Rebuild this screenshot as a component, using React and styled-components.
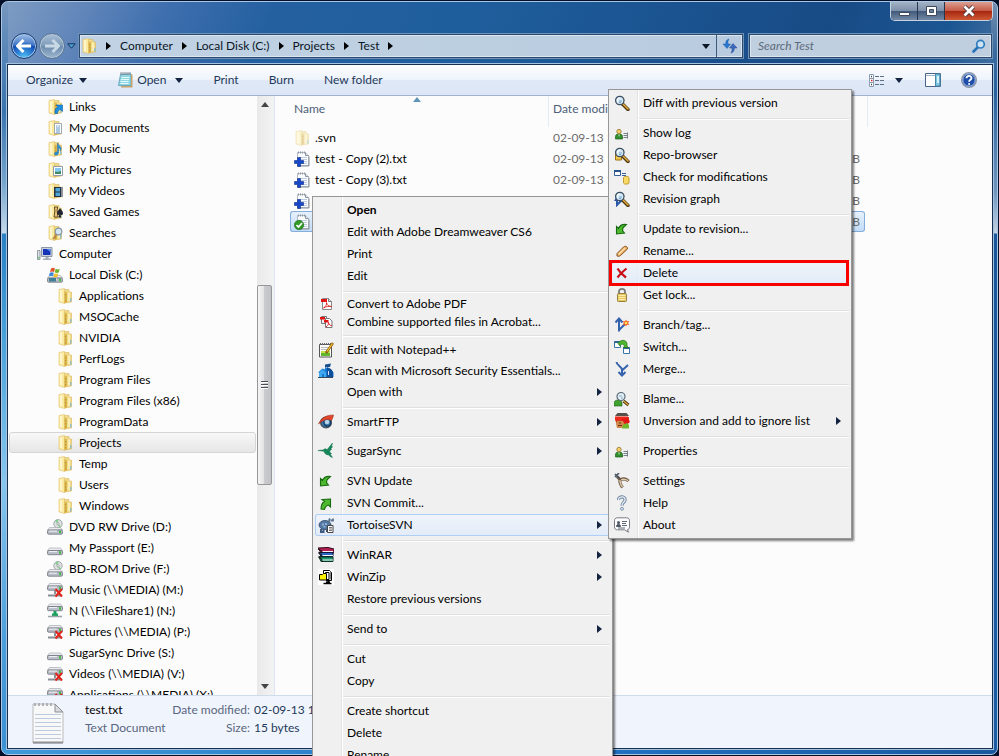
import React from "react";
import styled, { createGlobalStyle, css } from "styled-components";

const Global = createGlobalStyle`
  * { box-sizing: border-box; }
  html, body { margin: 0; height: 100%; overflow: hidden; background: #04102a; }
  body, button, input, table { font-family: Lato, "Open Sans", sans-serif; font-size: 12px; line-height: 16px; }
  button { margin: 0; padding: 0; border: 0; background: none; color: inherit; }
  ul { margin: 0; padding: 0; list-style: none; }
  svg { display: block; flex: none; }
`;

/* ---------- icons ---------- */

const Folder = ({ pale }) => (
  <g opacity={pale ? 0.5 : 1}>
    <path d="M6 1.500h6v2.500h2.500v10L7 15z" fill="#f0d98a" stroke="#dcb95c" strokeWidth=".6" />
    <path d="M2 1.500 7.500.5v15L2 14z" fill="#fbeaa2" stroke="#e0c068" strokeWidth=".6" />
    <path d="M3 2.500v10.500l2 .5V2z" fill="#fff6cd" />
    <path d="M7.500 3.500 10 4v10.500l-2.500 1z" fill="#dcb94f" />
    <path d="M8.700 6v8" stroke="#c08a2c" strokeDasharray="1.500 1.500" />
    <path d="M11 4.500h2V13h-2z" fill="#fbeeb4" />
    <path d="M13.800 10v3.500" stroke="#69b5dd" />
  </g>
);
const Lens = ({ tint = "#d5e9f5" }) => (
  <>
    <path d="M8.500 9l5.500 5.500" stroke="#4a3513" strokeWidth="3.400" strokeLinecap="round" />
    <path d="M9 9l5 5" stroke="#e0a93c" strokeWidth="1.600" strokeLinecap="round" />
    <circle cx="5.800" cy="5.500" r="4.200" fill={tint} stroke="#3b4f63" strokeWidth="1.300" />
    <path d="M3.500 6.500a3 3 0 0 1 2.500-3.500" stroke="#fff" fill="none" />
    <path d="M5 6h3M5 7.500h2" stroke="#5e95c4" strokeWidth=".8" />
  </>
);
const Person = () => (
  <>
    <path d="M1.500 14v-2.500C1.500 9.500 3 9 5 9s3.500.5 3.500 2.500V14z" fill="#2f8f2b" stroke="#1d5c1a" strokeWidth=".7" />
    <circle cx="5" cy="6.500" r="2.200" fill="#f2cf6a" stroke="#8a6a1c" strokeWidth=".7" />
    <path d="M4.300 9.500 5 12l.8-2.500z" fill="#e8f4e0" />
    <path d="M9.500 8.500h4M9.500 10.500h4M9.500 12.500h4M13.500 7.500v6" stroke="#69747d" strokeWidth=".9" />
  </>
);
const Drive = ({ y = 8 }) => (
  <>
    <path d={`M2.500 ${y}h11l2 2.500H.5z`} fill="#e9ebee" stroke="#9a9ea6" strokeWidth=".6" />
    <rect x=".5" y={y + 2.5} width="15" height="4.200" rx="1.200" fill="#b9bdc7" stroke="#6d727c" strokeWidth=".8" />
    <path d={`M2 ${y + 3.6}h8`} stroke="#f3f4f7" />
    <path d={`M13 ${y + 3.3}v2.400`} stroke="#1fbe1f" strokeWidth="1.600" />
  </>
);
const Disc = () => (
  <>
    <circle cx="11" cy="4.800" r="4.200" fill="#dfe4e2" stroke="#8b9397" strokeWidth=".8" />
    <path d="M11 4.800 8 2a4 4 0 0 1 3-1.200zM11 4.800 14 7.600a4 4 0 0 1-2 1.200z" fill="#7ccf8a" />
    <circle cx="11" cy="4.800" r="1.200" fill="#fff" stroke="#777" strokeWidth=".6" />
    <Drive y={8.500} />
  </>
);
const Page = () => (
  <>
    <path d="M3.500 1.500h8l3 3v10h-11z" fill="#fbfcfe" stroke="#b7bdc6" />
    <path d="M4 1.500h7" stroke="#8f96a2" strokeDasharray="1 1" strokeWidth="2" />
    <path d="M11.500 1.500v3h3" fill="#dfe3ea" stroke="#8c93a0" />
    <path d="M5 6.500h8M5 8.500h8M5 10.500h8M5 12.500h8" stroke="#bccbe2" />
    <path d="M3.500 15h11.500v-9.500" fill="none" stroke="#8a909a" />
  </>
);
const Pdf = () => (
  <>
    <path d="M4.500 2.500h6l3 3v8h-9z" fill="#fff" stroke="#8a8a8a" />
    <path d="M10.500 2.500v3h3" fill="#ddd" stroke="#777" />
    <path d="M3 3h6v3H3z" fill="#e11414" />
    <path d="M5.500 12c2.500-1.500 3.200-3.500 3-5.500.5 3 2.500 4 5 4-3-.5-5.500 0-8 1.500z" fill="none" stroke="#d22" strokeWidth=".9" />
  </>
);
const Cross = () => <path d="M8.500 7l6.500 7.500M15 7l-6.500 7.500" stroke="#e0261b" strokeWidth="2" />;

const art = {
  folder: <Folder />,
  paleFolder: <Folder pale />,
  links: <><Folder /><path d="M8 14.500c-.5-4 1-6 3-6.500L9 6h6.500v6.500L13.500 10.500c-2 .5-3 2-3 4z" fill="#1d8fe0" stroke="#0b5ca5" strokeWidth=".6" /></>,
  documents: <><Folder /><path d="M7.500 3.500h7v10h-7z" fill="#fff" stroke="#8c99a8" strokeWidth=".8" /><path d="M9 6h1.500M9 8h4M9 10h4M9 12h4M11.500 6H13" stroke="#5e94ca" /></>,
  music: <><Folder /><path d="M10.500 2v9.500c-1-1-3.500 0-3 1.700.6 1.600 4 1 4-1.500V6.500c1.500.5 2 2 1.500 3.500 2-2.500 1-4-1-5.500z" fill="#2a96dc" stroke="#145f9e" strokeWidth=".5" /></>,
  pictures: <><Folder /><path d="M6.500 4.500h9v9h-9z" fill="#fff" stroke="#929ba8" /><path d="M8 6h6v6H8z" fill="#86c8ef" /><path d="M8 12V9.500l2.500.5 3.500-1V12z" fill="#3f8b60" /></>,
  videos: <><Folder /><path d="M7 4h8.500v10H7z" fill="#29333f" /><path d="M8.500 5h4.500v3.500H8.500zM8.500 9.500h4.500V13H8.500z" fill="#4da4d8" /><path d="M14.500 4.500v9" stroke="#e2e8ed" strokeDasharray="1 1" /></>,
  games: <><Folder /><path d="M7.500 3h3v2l-.5 1 1 7H7l1-7-.5-1z" fill="#e6c27a" stroke="#4e3512" strokeWidth=".8" /><path d="M13 4c1 2 3 3 3 5.500 0 1.500-1.500 2-2.500 1l.8 3h-3l1-3c-1 1-2.300.3-2.300-1C10 7 12 6 13 4z" fill="#222631" /></>,
  searches: <><Folder /><path d="M10 9l-4 5" stroke="#b98646" strokeWidth="2" /><circle cx="11.500" cy="6.500" r="3.300" fill="#d3e6f1" stroke="#8697a5" strokeWidth="1.200" /></>,
  computer: <><path d="M4.500 1.500H15v9H4.500z" fill="#c9d2dd" stroke="#8d98a6" /><path d="M6 3h7.500v6H6z" fill="#1733b8" /><path d="M9.500 3h4v3z" fill="#5a8df0" /><path d="M8.500 11h3v1.500H14V14H6v-1.500h2.500z" fill="#a4adb8" /><path d="M.5 4.500h2.500v9H.5z" fill="#dfe4ea" stroke="#7d8792" strokeWidth=".8" /><path d="M1.800 11v1.500" stroke="#2b2" /></>,
  localDisk: <><Drive y={8.500} /><path d="M2 11h7v3.500H2z" fill="#3f7f98" /><path d="M4 1.500c1.500-1 2.500-1 4 0L7 5c-1.500-.8-2.500-.8-4 0z" fill="#e2552d" /><path d="M8.700 1.800c1.500.8 2.500.8 4 .2l-1 3.500c-1.500.6-2.500.6-4-.2z" fill="#6cb52d" /><path d="M2.800 5.800c1.500-.8 2.500-.8 4 0l-1 3.500c-1.500-.8-2.500-.8-4 0z" fill="#3a86d8" /><path d="M7.400 6.200c1.500.8 2.500.8 4 .2l-1 3.500c-1.500.6-2.500.6-4-.2z" fill="#f4c22e" /></>,
  disc: <Disc />,
  drive: <Drive y={8} />,
  offline: <><Drive y={1.500} /><path d="M8 8.500V12M1 13.500h14" stroke="#8a8f96" strokeWidth="2" /><Cross /></>,
  network: <><Drive y={1} /><path d="M8 8v4M5 12h6" stroke="#18a05c" strokeWidth="3" /><path d="M1 13.500h14" stroke="#9ca3a8" strokeWidth="1.500" /></>,
  added: <><Page /><path d="M3.500 6.500h3v3H9.500v3H6.500v3h-3v-3H.5v-3h3z" fill="#1648c9" stroke="#0b2c8a" strokeWidth=".6" /></>,
  normal: <><Page /><circle cx="5" cy="11" r="4.700" fill="#2f9a26" stroke="#1d6418" strokeWidth=".6" /><path d="M2.500 11l2 2 3.500-4" stroke="#fff" strokeWidth="1.700" fill="none" /></>,
  notepadFile: <><path d="M3.500 2.500 14 2v11.500H1.500z" fill="#8fd5e2" stroke="#5b9bb0" strokeWidth=".8" /><path d="M14 2.500h1.500v13H4V14h10z" fill="#c8a46b" /><path d="M3.500 1.500h10.500" stroke="#6d7680" strokeDasharray="1 1" strokeWidth="2.500" /><path d="M4.500 5.500h8M4 7.500h8M3.500 9.500h8M3.500 11.500h8" stroke="#e4fafd" /></>,
  pdf: <Pdf />,
  pdfs: <><path d="M3.500 2.500h5v7h-5z" fill="#eee" stroke="#777" /><path d="M2 3h5v2.500H2z" fill="#e11414" /><path d="M7.500 4.500h4l2.500 2.500v6.500H7.500z" fill="#fff" stroke="#777" /><path d="M6 6h4.500v2.500H6z" fill="#e11414" /><path d="M8 13C9.500 12 10.500 11 10.500 8.500c.5 2 1.500 3 3.500 3" fill="none" stroke="#d22" /></>,
  notepadpp: <><path d="M1.500 2.500h12v12.500h-12z" fill="#fff" stroke="#555" /><path d="M2 2h11" stroke="#666" strokeWidth="2" strokeDasharray="1 1" /><path d="M3 5.500h9M3 7.500h7" stroke="#bbb" /><path d="M3 9h9v5H3z" fill="#61b72d" /><path d="M3 9h9v2H3z" fill="#c3e04e" /><path d="M8 11 15 1" stroke="#8a5a12" strokeWidth="2.600" /><path d="M9 9.500 14.500 1.500" stroke="#f5c430" strokeWidth="1.300" /></>,
  castle: <><path d="M0 9.500 4.500 5.500 7 6.500V4l6 2.500 2.500 3V14H1V9.500z" fill="#1579cf" /><path d="M9 4l4 2 2 3v5H9z" fill="#0f4f9b" /><path d="M7 1.500 13 .5l-1 3.500H7z" fill="#1a4f8e" /><path d="M1 9.500l3.500-3 3.500 3V14H6v-3H4v3H1z" fill="#3fa8f0" /><path d="M10.500 8v4" stroke="#cfe5f8" /><path d="M0 14.500h15" stroke="#39495a" /></>,
  smartftp: <><circle cx="8" cy="8.500" r="5.300" fill="#3b75a8" stroke="#4d5561" strokeWidth="1.500" /><circle cx="9" cy="8" r="2.300" fill="#b7d4e8" /><path d="M.5 10C3 4 8 1 15.500 1c-.5 3-1.500 5-3 6.500 0-3-6-3-12 2.500z" fill="#e0472a" stroke="#8d2617" strokeWidth=".5" /><path d="M6 7.500a3.500 3.500 0 1 0 6-1" fill="none" stroke="#153c64" strokeWidth="1.300" /></>,
  bird: <path d="M0 7.500 5 7l2-1.200c1 0 1.500.5 2 1L14.500 0l-.8 3 .8 1-1.500 1.500.5 1-2 1.500.5 1.500 1.500 1-1 1 2 3-2.500-1L11 12C8 12 6.500 10.500 6 8.200z" fill="#16875b" stroke="#0f6f49" strokeWidth=".5" />,
  update: <path d="M2.500 5.500 4.500 7.500C6 4 9 3 12.500 3.500l-2 2C9 6 8.500 7.500 8.500 9.500L10.500 12 2.500 13z" fill="#4dba2d" stroke="#196b12" strokeWidth="1.100" />,
  commit: <path d="M4 4.500 12.500 4v8l-2-2c-2 .5-3.500 2-4 4.500L3 14c0-3.500 1-6 3.500-7.500z" fill="#4dba2d" stroke="#196b12" strokeWidth="1.100" />,
  tortoise: <><ellipse cx="7" cy="8" rx="6" ry="4.500" fill="#5379a4" stroke="#2e4866" strokeWidth=".8" /><path d="M3 12v3h2.500v-3M9 12v3" stroke="#3c5b7e" strokeWidth="2" fill="none" /><path d="M4 6.500h2v2H4zM7 6h2v2H7zM5.500 9h2v1.500h-2z" fill="#8eb3d8" /><path d="M11 7c0-2.500-.5-4 1-5.500M12.500 3.500H15V1.500" stroke="#5b7590" strokeWidth="1.800" fill="none" /><path d="M9.500 8.500H15v7H9.500z" fill="#fff" stroke="#444" /><path d="M11 10.500h3M11 12h3M11 13.500h3" stroke="#555" strokeWidth=".8" /></>,
  winrar: <><path d="M0 1l10-.5L16 2v4H3z" fill="#b21e53" stroke="#330a19" /><path d="M1 5.500h14v4H3z" fill="#2866c4" stroke="#101a3c" /><path d="M1 10h14v4.500H3z" fill="#1a9a71" stroke="#0b3626" /><path d="M0 2l4 2v1.500l-3.500.5L4 8v1.500L.5 10 4 12.500V15" fill="none" stroke="#161616" /><path d="M4.500 4.500H15M4.500 8.500H15M4.500 13H15" stroke="#f5f5f5" /></>,
  winzip: <><path d="M0 0h16v16H0z" fill="#fff" /><path d="M5.500 4.500v-3h6l2 2v8H8" fill="none" stroke="#000" /><path d="M7.500 4v-.5h3.500v7H9" fill="none" stroke="#000" /><path d="M12.500 2.500v8" stroke="#888" /><path d="M1.500 5.500h3l1-1h3v6.500h-7z" fill="#fff200" stroke="#000" /><path d="M10.500 11.500V14M5.500 14.500h8M8 13h4" stroke="#000" strokeWidth="1.300" /></>,
  lens: <Lens />,
  person: <Person />,
  repo: <><path d="M1.500 6.500h6v6.500h-6z" fill="#f3c64e" stroke="#9d7213" /><Lens /></>,
  check: <><path d="M.5 1.500h6v5h-6z" fill="#fff" stroke="#355f9b" /><path d="M0 2h7" stroke="#2b5390" strokeWidth="2" /><path d="M8 4.500h4M8 6.500h4" stroke="#38629a" /><path d="M9.500 8.500c0-1.500 5.500-1.500 5.500 0v5.500c0 1.500-5.500 1.500-5.500 0z" fill="#f8db66" stroke="#b88a17" strokeWidth=".8" /></>,
  graph: <><path d="M3 7v7l6-6" fill="none" stroke="#2c58a8" strokeWidth="2" /><path d="M0 10l3-5 3 5" fill="#2c58a8" /><Lens /></>,
  rename: <><path d="M3 13 3 10.500l6.500-6.500c1.500-1.500 4.500-.5 4 2L6.500 12.500c-1 1-2.500 1-3.500.5z" fill="#e9ac5e" stroke="#7a4a1a" strokeWidth=".9" /><path d="M4.500 11.500l6.500-6.500" stroke="#ffe1ad" strokeWidth="1.500" /></>,
  remove: <path d="M3.500 3.500c2 3.500 4.500 6 8.500 9M12.500 3.500C9.500 6 6 9 3.500 12.500" stroke="#c80f17" strokeWidth="2.200" fill="none" />,
  lock: <><path d="M5 7V4.500c0-3.500 6-3.500 6 0V7" fill="none" stroke="#777a7c" strokeWidth="1.800" /><rect x="3.500" y="6.500" width="9" height="8" rx="1" fill="#e8c75f" stroke="#8d732c" strokeWidth=".9" /><path d="M4.500 8.500h7M4.500 10.500h7M4.500 12.500h7" stroke="#fbebae" /></>,
  branch: <><path d="M5 14.500V2M1.500 5.500 5 1.500l3.500 4M5 13l6-6" fill="none" stroke="#3562ac" strokeWidth="2" /><path d="M12 2.500l1 1.700 2.200-.2-1 2 1 2-2.200-.2-1 1.700-1-1.700-2.200.2 1-2-1-2 2.200.2z" fill="#f2662b" /><circle cx="12" cy="6" r="1.300" fill="#ffe15a" /></>,
  switch: <><path d="M.5 2.500h6v6h-6z" fill="#fff" stroke="#3a76a8" /><path d="M.5 3h6" stroke="#2d6698" strokeWidth="2" /><path d="M9.500 8.500h6v6h-6z" fill="#fff" stroke="#3a76a8" /><path d="M9.500 9h6" stroke="#2d6698" strokeWidth="2" /><path d="M4 4.500c3-4.500 8-4 9 0V7l1.500 1.500H9.500L10.500 7C9.500 4.500 7 4.500 6 7z" fill="#4fb52d" stroke="#237017" strokeWidth=".7" /></>,
  merge: <path d="M2.500 1c.5 4 5.500 4 5.500 8v5M14 4 8 9.500M4.500 11 8 14.500l3.500-3.500" fill="none" stroke="#3562ac" strokeWidth="2" />,
  blame: <><path d="M0 15v-3c0-2 2-3 4-3s4 1 4 3v3z" fill="#3fa22d" stroke="#1d5c1a" strokeWidth=".6" /><path d="M9.500 10l5 4" stroke="#4a3513" strokeWidth="3" /><path d="M9.500 10l5 4" stroke="#e0a93c" strokeWidth="1.300" /><circle cx="7" cy="5.500" r="4" fill="#e1eef6" stroke="#5c6975" strokeWidth="1.200" /><path d="M5 5h3M7 7h2" stroke="#86acc7" /></>,
  unversion: <><path d="M1 4h14v6l-4 2-9-2z" fill="#c63c22" /><path d="M3.500 0h9l2.500 3H1z" fill="#55504a" /><path d="M1 3.500h13v4H1z" fill="#ed2b1c" /><path d="M8 6l6-1 2 4-3 2-4-1z" fill="#e41515" /><path d="M3 8h6l2 4-3 3H3l-1-4z" fill="#cf8a4b" /><path d="M9 12l4-2 2 2v3.500H8z" fill="#72b62b" /><path d="M5 10h2M4 12.500h4" stroke="#6b3018" /></>,
  settings: <><path d="M3 3.500 6 6.500c-1 3 .5 5 2.500 8M6.500 7C9 5.500 12 5.500 14.500 8" fill="none" stroke="#6a5546" strokeWidth="3" /><path d="M6 7c-.5 3 1 5 2.500 7M7 6.800c3-1 5-.5 7 1" fill="none" stroke="#e3cba9" strokeWidth="1.400" /><path d="M1 4 5 0M1 1l4 4" stroke="#4b5966" strokeWidth="1.700" /></>,
  help: <><path d="M4.500 5c0-4.500 7.500-4 6.500.3C10.500 7.500 8 7.500 8 10.500" fill="none" stroke="#6f86a0" strokeWidth="3.200" /><path d="M4.500 5c0-4.500 7.500-4 6.500.3C10.500 7.500 8 7.500 8 10.300" fill="none" stroke="#e6eef6" strokeWidth="1.300" /><circle cx="8" cy="13.800" r="1.500" fill="#d5e0eb" stroke="#6f86a0" strokeWidth=".8" /></>,
  about: <><path d="M3.500.8h9c2 0 3 1 3 3v6c0 1.700-.7 2.500-2 2.800l1 2.600-4-2.400h-7c-2 0-3-1-3-3v-6c0-2 1-3 3-3z" fill="#fdfdfd" stroke="#6b6c78" strokeWidth=".9" /><circle cx="4.500" cy="5.500" r="1.500" fill="#4b5563" /><path d="M2.500 9.500c0-3 4-3 4 0zM8 4.500h5M8 6.500h4M8 8.500h5M4 11h7" fill="#4b5563" stroke="#3b4250" strokeWidth=".8" /></>,
};

const Icon = ({ name, size = 16 }) => (
  <svg width={size} height={size} viewBox="0 0 16 16" aria-hidden="true">{art[name]}</svg>
);

const Triangle = ({ dir = "right", color = "#14233f" }) => {
  const shapes = {
    right: [5, 8, "M0 0l5 4-5 4z"],
    down: [8, 5, "M0 0h8L4 5z"],
    up: [8, 5, "M0 5h8L4 0z"],
  };
  const [w, h, d] = shapes[dir];
  return <svg width={w} height={h} viewBox={`0 0 ${w} ${h}`} aria-hidden="true"><path d={d} fill={color} /></svg>;
};

/* ---------- window frame ---------- */

const Desktop = styled.div`
  position: relative;
  height: 100vh;
  padding: 1px;
  overflow: hidden;
`;

const WindowFrame = styled.div`
  display: flex;
  flex-direction: column;
  height: 100%;
  padding: 0 4px 5px 5px;
  border: 1px solid #a9c6e2;
  border-radius: 7px;
  background:
    linear-gradient(90deg, #3f9ad9 0, #2f83cc 300px, #1f6fbe 640px, #19589f 100%) bottom / 100% 6px no-repeat,
    linear-gradient(180deg, #7797bf 0, #4c7fb4 70px, #3b74ae 110px, #74a5cd 180px, #c6daeb 231px, #2a80c4 232px, #46a1d9 330px, #86c6ee 480px, #4b9edb 640px, #3a90d2 100%) left / 6px 100% no-repeat,
    linear-gradient(180deg, #7590b0 0, #3a6b9e 50px, #27619d 90px, #7096be 190px, #c2d2e2 231px, #1a569a 232px, #1c5ca2 100%) right / 6px 100% no-repeat,
    linear-gradient(115deg, #7f9dc3 0, #6488bb 70px, #3f6fae 150px, #2460a0 250px, #1f5e9d 420px, #174b86 760px, #1c5692 870px, #5f83a9 970px, #8099b5 100%);
`;

const TitleBar = styled.header`
  display: flex;
  justify-content: flex-end;
  align-items: flex-start;
  height: 32px;
`;

const CaptionGroup = styled.div`
  display: flex;
  border: 1px solid #c5d2e0;
  border-top: 0;
  border-radius: 0 0 5px 5px;
  overflow: hidden;
`;

const CaptionButton = styled.button`
  display: grid;
  place-items: center;
  width: ${(p) => (p.$close ? 47 : 27)}px;
  height: 18px;
  border-right: ${(p) => (p.$close ? 0 : "1px solid #26364c")};
  background: ${(p) => (p.$close
    ? "linear-gradient(#dba093 0, #c75b47 48%, #a5240f 50%, #cf5a35 100%)"
    : "linear-gradient(#a3b3c6 0, #7e91aa 48%, #40587a 50%, #7389a4 100%)")};
`;

const NavRow = styled.nav`
  display: flex;
  align-items: center;
  gap: 2px;
  height: 24px;
  margin: 0 1px 6px 4px;
`;

const Orb = styled.button`
  display: grid;
  place-items: center;
  width: 26px;
  height: 26px;
  border: 1px solid ${(p) => (p.$dim ? "#5c7794" : "#1c3d6d")};
  border-radius: 50%;
  background: ${(p) => (p.$dim
    ? "linear-gradient(#a9bfd5, #7d9bb9 50%, #6c8cae 52%, #9bb5cd)"
    : "radial-gradient(circle at 50% 100%, #53c7f7 0, #1c62c4 45%, transparent 60%), linear-gradient(#9fc1e8, #3c71c4 48%, #0f3e9e 52%, #1b66c9)")};
  box-shadow: inset 0 0 0 1px ${(p) => (p.$dim ? "#b9cbdc" : "#a9c8ec")};
`;

const Glass = css`
  display: flex;
  align-items: center;
  height: 24px;
  border: 1px solid #2b4a6d;
  box-shadow: inset 0 0 0 1px #dbe6f0, 0 0 0 1px #6f93b8;
  background: linear-gradient(90deg, #c0d2e3, #bccfe1 60%, #b9cbdf);
`;

const AddressBar = styled.div`
  ${Glass}
  flex: 1;
  min-width: 0;
  margin-left: 1px;
`;

const Crumbs = styled.div`
  display: flex;
  align-items: center;
  flex: 1;
  min-width: 0;
  gap: 9px;
  padding-left: 1px;
`;

const Crumb = styled.a`
  color: #0b1626;
  text-decoration: none;
  white-space: nowrap;
`;

const AddressButton = styled.button`
  display: grid;
  place-items: center;
  width: ${(p) => (p.$divided ? 26 : 20)}px;
  height: 22px;
  border-left: ${(p) => (p.$divided ? "1px solid #3d5b7c" : 0)};
`;

const SearchBox = styled.label`
  ${Glass}
  width: 243px;
  margin-left: 4px;
  padding: 0 5px 0 8px;
  background: #bfcfdf;
`;

const SearchInput = styled.input`
  flex: 1;
  min-width: 0;
  padding: 0;
  border: 0;
  outline: 0;
  background: transparent;
  font-style: italic;
  &::placeholder { color: #5d6b7c; opacity: 1; }
`;

const Client = styled.div`
  display: flex;
  flex-direction: column;
  flex: 1;
  min-height: 0;
  border: 1px solid #17304f;
  box-shadow: 0 0 0 1px #a5c3e0;
  background: #fcfcfc;
`;

/* ---------- toolbar ---------- */

const Toolbar = styled.div`
  display: flex;
  align-items: center;
  height: 31px;
  padding: 0 15px 0 18px;
  border-bottom: 1px solid #a0b4d0;
  background: linear-gradient(#fbfdff 0, #eff4fc 48%, #dfe8f6 52%, #dde7f7 100%);
  color: #1e395b;
`;

const ToolButton = styled.button`
  display: flex;
  align-items: center;
  gap: ${(p) => p.$gap ?? 6}px;
  margin-right: ${(p) => p.$after ?? 30}px;
`;

const Spacer = styled.div`
  flex: 1;
`;

/* ---------- panes ---------- */

const Panes = styled.div`
  display: flex;
  flex: 1;
  min-height: 0;
`;

const TreePane = styled.aside`
  display: flex;
  width: 267px;
  border-right: 1px solid #dbe5f3;
`;

const Tree = styled.ul`
  flex: 1;
  min-width: 0;
  overflow: hidden;
`;

const TreeRow = styled.li`
  display: flex;
  align-items: center;
  gap: 6px;
  height: 21px;
  margin: 0 1px;
  padding-left: ${(p) => 27 + p.$depth * 10}px;
  border: 1px solid transparent;
  border-radius: 3px;
  white-space: nowrap;
  ${(p) => p.$selected && css`
    border-color: #d5d5d5;
    background: linear-gradient(#f8f8f8, #e6e6e6);
  `}
`;

const ScrollTrack = styled.div`
  display: flex;
  flex-direction: column;
  width: 17px;
  background: linear-gradient(90deg, #e9e9e9, #f3f3f3);
`;

const ScrollButton = styled.button`
  display: grid;
  place-items: center;
  width: 16px;
  height: 17px;
`;

const ScrollThumb = styled.div`
  display: grid;
  place-items: center;
  width: 15px;
  height: 200px;
  margin: 172px 0 auto;
  border: 1px solid #979797;
  border-radius: 2px;
  background: linear-gradient(90deg, #f5f5f5 0, #e3e3e5 45%, #cbcbcf 50%, #c0c1c6 100%);
`;

const Files = styled.main`
  flex: 1;
  min-width: 0;
  padding-left: 15px;
  overflow: hidden;
`;

const FileTable = styled.table`
  table-layout: fixed;
  width: 578px;
  border-spacing: 0;
`;

const HeadCell = styled.th`
  position: relative;
  width: ${(p) => p.$width}px;
  height: 31px;
  padding: ${(p) => (p.$filler ? 0 : "5px 4px")};
  border-right: 1px solid ${(p) => (p.$plain ? "transparent" : "#e3ebf5")};
  color: #4c607a;
  font-weight: 400;
  text-align: left;
  vertical-align: top;
`;

const SortMark = styled.span`
  position: absolute;
  top: 1px;
  left: calc(50% - 6px);
`;

const FileRow = styled.tr`
  ${(p) => p.$selected && css`
    td { border-color: #84acdd; background: linear-gradient(#e6f1fc, #c2dcf7); }
  `}
`;

const Cell = styled.td`
  height: 21px;
  padding: 0 4px;
  border: 0 solid transparent;
  border-width: 1px 0;
  color: ${(p) => (p.$name ? "#000" : "#6d6d6d")};
  text-align: ${(p) => (p.$end ? "right" : "left")};
  white-space: nowrap;
  overflow: hidden;
  &:first-child { padding-left: 3px; border-left-width: 1px; border-radius: 3px 0 0 3px; }
  &:last-child { border-right-width: 1px; border-radius: 0 3px 3px 0; }
`;

const NameBox = styled.div`
  display: flex;
  align-items: center;
  gap: 5px;
  height: 19px;
`;

/* ---------- details ---------- */

const Details = styled.footer`
  display: flex;
  height: 53px;
  padding: 6px 24px;
  border-top: 1px solid #cfdcec;
  background: #f0f4fc;
  white-space: nowrap;
`;

const DetailName = styled.div`
  display: grid;
  grid-auto-rows: 18px;
  width: 82px;
  margin-left: 21px;
  color: #5a6780;
`;

const Strong = styled.span`
  color: #000;
`;

const DetailFacts = styled.dl`
  display: grid;
  grid-template-columns: 83px auto;
  grid-auto-rows: 18px;
  column-gap: 4px;
  margin: 0;
  dt { color: #5a6780; text-align: right; }
  dd { margin: 0; color: #1e395b; }
`;

/* ---------- context menus ---------- */

const MenuPanel = styled.div`
  position: absolute;
  left: ${(p) => p.$left}px;
  top: ${(p) => p.$top}px;
  width: ${(p) => p.$width}px;
  padding: 2px;
  border: 1px solid #979797;
  background: linear-gradient(90deg, transparent 28px, #e2e3e3 28px, #e2e3e3 29px, #fff 29px, #fff 30px, transparent 30px) #f0f0f0;
  background-clip: padding-box;
  box-shadow: 2px 2px 2px rgba(0, 0, 0, 0.5);
`;

const MenuItem = styled.button`
  position: relative;
  display: grid;
  grid-template-columns: 16px 1fr 5px;
  column-gap: 13px;
  align-items: center;
  width: 100%;
  height: ${(p) => p.$height}px;
  padding: 0 8px 0 3px;
  border-radius: 3px;
  color: #000;
  font-weight: ${(p) => (p.$bold ? 700 : 400)};
  text-align: left;
  white-space: nowrap;
  ${(p) => p.$hot && css`
    box-shadow: inset 0 0 0 1px #aecff7;
    background: linear-gradient(rgba(240, 245, 252, 0.8), rgba(222, 234, 250, 0.8));
  `}
  ${(p) => p.$marked && css`
    &::after {
      content: "";
      position: absolute;
      inset: -2px 0 -2px -2px;
      border: 3px solid #f80000;
    }
  `}
`;

const Separator = styled.hr`
  height: 2px;
  margin: 4px 0 2px 28px;
  border: 0;
  border-top: 1px solid #e0e0e0;
  border-bottom: 1px solid #fff;
`;

/* ---------- data ---------- */

const tree = [
  ["links", "Links", 1], ["documents", "My Documents", 1], ["music", "My Music", 1],
  ["pictures", "My Pictures", 1], ["videos", "My Videos", 1], ["games", "Saved Games", 1],
  ["searches", "Searches", 1], ["computer", "Computer", 0], ["localDisk", "Local Disk (C:)", 1],
  ["folder", "Applications", 2], ["folder", "MSOCache", 2], ["folder", "NVIDIA", 2],
  ["folder", "PerfLogs", 2], ["folder", "Program Files", 2], ["folder", "Program Files (x86)", 2],
  ["folder", "ProgramData", 2], ["folder", "Projects", 2], ["folder", "Temp", 2],
  ["folder", "Users", 2], ["folder", "Windows", 2], ["disc", "DVD RW Drive (D:)", 1],
  ["drive", "My Passport (E:)", 1], ["disc", "BD-ROM Drive (F:)", 1],
  ["offline", "Music (\\\\MEDIA) (M:)", 1], ["network", "N (\\\\FileShare1) (N:)", 1],
  ["offline", "Pictures (\\\\MEDIA) (P:)", 1], ["drive", "SugarSync Drive (S:)", 1],
  ["offline", "Videos (\\\\MEDIA) (V:)", 1], ["offline", "Applications (\\\\MEDIA) (X:)", 1],
];

const files = [
  { icon: "paleFolder", name: ".svn", date: "02-09-13 14:26", type: "File folder", size: "" },
  { icon: "added", name: "test - Copy (2).txt", date: "02-09-13 14:26", type: "Text Document", size: "1 KB" },
  { icon: "added", name: "test - Copy (3).txt", date: "02-09-13 14:26", type: "Text Document", size: "1 KB" },
  { icon: "added", name: "test - Copy.txt", date: "02-09-13 14:26", type: "Text Document", size: "1 KB" },
  { icon: "normal", name: "test.txt", date: "02-09-13 14:26", type: "Text Document", size: "1 KB", selected: true },
];

const line = { line: true };
const fileMenu = [
  { label: "Open", bold: true }, { label: "Edit with Adobe Dreamweaver CS6" }, { label: "Print" }, { label: "Edit" },
  line,
  { icon: "pdf", label: "Convert to Adobe PDF", height: 18 },
  { icon: "pdfs", label: "Combine supported files in Acrobat...", height: 18 },
  line,
  { icon: "notepadpp", label: "Edit with Notepad++", height: 21 },
  { icon: "castle", label: "Scan with Microsoft Security Essentials...", height: 21 },
  { label: "Open with", sub: true },
  line,
  { icon: "smartftp", label: "SmartFTP", sub: true, height: 21 },
  line,
  { icon: "bird", label: "SugarSync", sub: true },
  line,
  { icon: "update", label: "SVN Update" }, { icon: "commit", label: "SVN Commit..." },
  { icon: "tortoise", label: "TortoiseSVN", sub: true, hot: true },
  line,
  { icon: "winrar", label: "WinRAR", sub: true }, { icon: "winzip", label: "WinZip", sub: true },
  { label: "Restore previous versions" },
  line,
  { label: "Send to", sub: true },
  line,
  { label: "Cut" }, { label: "Copy" },
  line,
  { label: "Create shortcut" }, { label: "Delete" }, { label: "Rename" },
];

const svnMenu = [
  { icon: "lens", label: "Diff with previous version" },
  line,
  { icon: "person", label: "Show log" }, { icon: "repo", label: "Repo-browser" },
  { icon: "check", label: "Check for modifications" }, { icon: "graph", label: "Revision graph" },
  line,
  { icon: "update", label: "Update to revision..." }, { icon: "rename", label: "Rename..." },
  { icon: "remove", label: "Delete", hot: true, marked: true }, { icon: "lock", label: "Get lock..." },
  line,
  { icon: "branch", label: "Branch/tag..." }, { icon: "switch", label: "Switch..." }, { icon: "merge", label: "Merge..." },
  line,
  { icon: "blame", label: "Blame..." }, { icon: "unversion", label: "Unversion and add to ignore list", sub: true },
  line,
  { icon: "person", label: "Properties" },
  line,
  { icon: "settings", label: "Settings" }, { icon: "help", label: "Help" }, { icon: "about", label: "About" },
];

const Menu = ({ items, left, top, width, name }) => (
  <MenuPanel role="menu" aria-label={name} $left={left} $top={top} $width={width}>
    {items.map((item, i) => item.line ? <Separator key={i} /> : (
      <MenuItem key={i} role="menuitem" $height={item.height ?? 22} $bold={item.bold} $hot={item.hot} $marked={item.marked}>
        {item.icon ? <Icon name={item.icon} /> : <span />}
        <span>{item.label}</span>
        {item.sub && <Triangle />}
      </MenuItem>
    ))}
  </MenuPanel>
);

export default function App() {
  return (
    <Desktop>
      <Global />
      <WindowFrame>
        <TitleBar>
          <CaptionGroup>
            <CaptionButton aria-label="Minimize">
              <svg width="13" height="12"><path d="M1.500 7.500h10v3h-10z" fill="#fff" stroke="#3e4a5d" /></svg>
            </CaptionButton>
            <CaptionButton aria-label="Maximize">
              <svg width="13" height="12"><path d="M1.500 1.500h10v9h-10z" fill="#fff" stroke="#3e4a5d" /><path d="M4.500 4.500h4v3h-4z" fill="#6c7f99" stroke="#3e4a5d" /></svg>
            </CaptionButton>
            <CaptionButton $close aria-label="Close">
              <svg width="14" height="12"><path d="M2.500 1.500 11.500 10.500M11.500 1.500 2.500 10.500" stroke="#4f3a40" strokeWidth="4.500" /><path d="M2.500 1.500 11.500 10.500M11.500 1.500 2.500 10.500" stroke="#fff" strokeWidth="2.600" /></svg>
            </CaptionButton>
          </CaptionGroup>
        </TitleBar>

        <NavRow aria-label="Location">
          <Orb aria-label="Back"><svg width="16" height="14"><path d="M7.500 1 1.500 7l6 6M2 7h13" fill="none" stroke="#fff" strokeWidth="3" /></svg></Orb>
          <Orb $dim aria-label="Forward"><svg width="16" height="14"><path d="M8.500 1l6 6-6 6M14 7H1" fill="none" stroke="#c9d8e5" strokeWidth="3" /></svg></Orb>
          <button aria-label="Recent pages"><svg width="9" height="6"><path d="M.8.800h7.400L4.500 5.200z" fill="#4f9fd8" stroke="#123459" /></svg></button>
          <AddressBar>
            <Crumbs>
              <Icon name="folder" />
              {["Computer", "Local Disk (C:)", "Projects", "Test"].map((c) => (
                <React.Fragment key={c}><Triangle color="#000" /><Crumb href="#">{c}</Crumb></React.Fragment>
              ))}
              <Triangle color="#000" />
            </Crumbs>
            <AddressButton aria-label="Previous locations"><Triangle dir="down" color="#0b1626" /></AddressButton>
            <AddressButton $divided aria-label="Refresh">
              <svg width="16" height="16"><path d="M7 1C4.500 1.500 3.500 3.500 3.800 6H1l4 4.500L8.500 6H6c-.2-2 0-3.500 1-5z" fill="#2878d0" stroke="#1a5aa8" strokeWidth=".5" /><path d="M9 15c2.500-.5 3.500-2.500 3.200-5H15l-4-4.500L7.500 10H10c.2 2 0 3.500-1 5z" fill="#3b6cc0" stroke="#22478f" strokeWidth=".5" /></svg>
            </AddressButton>
          </AddressBar>
          <SearchBox>
            <SearchInput aria-label="Search Test" placeholder="Search Test" />
            <svg width="14" height="14"><path d="M1.500 12.500 6 8" stroke="#2671b8" strokeWidth="2.600" strokeLinecap="round" /><circle cx="8.500" cy="5.200" r="3.800" fill="#cfe3f2" stroke="#2f7dc0" strokeWidth="1.700" /></svg>
          </SearchBox>
        </NavRow>

        <Client>
          <Toolbar>
            <ToolButton>Organize <Triangle dir="down" /></ToolButton>
            <ToolButton $gap={4} $after={9}><Icon name="notepadFile" />Open</ToolButton>
            <ToolButton aria-label="Open options"><Triangle dir="down" /></ToolButton>
            <ToolButton>Print</ToolButton>
            <ToolButton>Burn</ToolButton>
            <ToolButton>New folder</ToolButton>
            <Spacer />
            <ToolButton $after={22} $gap={10} aria-label="Change your view">
              <svg width="16" height="13"><path d="M.5.5h4v12h-4zM.5 4.500h4M.5 8.500h4" fill="#fff" stroke="#8b9db5" /><path d="M2 2.500h1M2 10.500h1" stroke="#345" strokeWidth="1.500" /><path d="M2 6.500h1.500" stroke="#e22" strokeWidth="1.500" /><path d="M6 2.500h4M11 2.500h4M6 6.500h4M11 6.500h4M6 10.500h4M11 10.500h4" stroke="#5e6f87" /></svg>
              <Triangle dir="down" />
            </ToolButton>
            <ToolButton $after={20} aria-label="Show the preview pane">
              <svg width="16" height="14"><path d="M.5.5h15v13H.5z" fill="#fff" stroke="#47658a" /><path d="M1 2.500h9" stroke="#a4b5c9" /><path d="M10.500 1h4.500v12h-4.500z" fill="#7cc8e4" stroke="#4c87a8" /><path d="M13 3v7" stroke="#d5f2fb" strokeWidth="2" /></svg>
            </ToolButton>
            <ToolButton $after={0} aria-label="Get help">
              <svg width="16" height="16"><circle cx="8" cy="8" r="7.300" fill="#1d4da8" stroke="#8c97a8" strokeWidth="1.400" /><circle cx="8" cy="8" r="6.200" fill="none" stroke="#c8d7ee" strokeWidth=".8" /><path d="M5.500 6.300c0-3.300 5.300-3 5 0-.2 1.500-2.400 1.500-2.400 3.400" fill="none" stroke="#fff" strokeWidth="1.800" /><circle cx="8.100" cy="12" r="1" fill="#fff" /></svg>
            </ToolButton>
          </Toolbar>

          <Panes>
            <TreePane>
              <Tree>
                {tree.map(([icon, label, depth]) => (
                  <TreeRow key={label} $depth={depth} $selected={label === "Projects"}><Icon name={icon} />{label}</TreeRow>
                ))}
              </Tree>
              <ScrollTrack>
                <ScrollButton aria-label="Scroll up"><Triangle dir="up" color="#444" /></ScrollButton>
                <ScrollThumb><svg width="7" height="8"><path d="M0 .5h7M0 3.500h7M0 6.500h7" stroke="#4a4d57" /><path d="M0 1.500h7M0 4.500h7M0 7.500h7" stroke="#fff" /></svg></ScrollThumb>
                <ScrollButton aria-label="Scroll down"><Triangle dir="down" color="#444" /></ScrollButton>
              </ScrollTrack>
            </TreePane>
            <Files>
              <FileTable>
                <thead>
                  <tr>
                    <HeadCell $width={259}>Name<SortMark><Triangle dir="up" color="#5f94b8" /></SortMark></HeadCell>
                    <HeadCell $width={120}>Date modified</HeadCell>
                    <HeadCell $width={119}>Type</HeadCell>
                    <HeadCell $width={77} $plain>Size</HeadCell>
                    <HeadCell as="td" $width={3} $filler />
                  </tr>
                </thead>
                <tbody>
                  {files.map((f) => (
                    <FileRow key={f.name} $selected={f.selected}>
                      <Cell $name><NameBox><Icon name={f.icon} />{f.name}</NameBox></Cell>
                      <Cell>{f.date}</Cell>
                      <Cell>{f.type}</Cell>
                      <Cell $end>{f.size}</Cell>
                    </FileRow>
                  ))}
                </tbody>
              </FileTable>
            </Files>
          </Panes>

          <Details>
            <svg width="32" height="42" viewBox="0 0 32 42" aria-hidden="true">
              <path d="M1 2h22l8 8v31H1z" fill="#f8f8f8" stroke="#b9bcc0" />
              <path d="M2 2.500h20" stroke="#b0b2b5" strokeWidth="3" strokeDasharray="2 2" />
              <path d="M23 2v8h8z" fill="#d9dadc" stroke="#8b8e92" />
              <path d="M3 12.500h26M3 16.500h26M3 20.500h26M3 24.500h26M3 28.500h26M3 32.500h26M3 36.500h26" stroke="#bccbdd" />
              <path d="M1 40.500h30" stroke="#8e9195" strokeWidth="2" />
            </svg>
            <DetailName><Strong>test.txt</Strong><span>Text Document</span></DetailName>
            <DetailFacts>
              <dt>Date modified:</dt><dd>02-09-13 14:26</dd>
              <dt>Size:</dt><dd>15 bytes</dd>
            </DetailFacts>
          </Details>
        </Client>
      </WindowFrame>

      <Menu name="File" items={fileMenu} left={312} top={196} width={301} />
      <Menu name="TortoiseSVN" items={svnMenu} left={608} top={89} width={244} />
    </Desktop>
  );
}
